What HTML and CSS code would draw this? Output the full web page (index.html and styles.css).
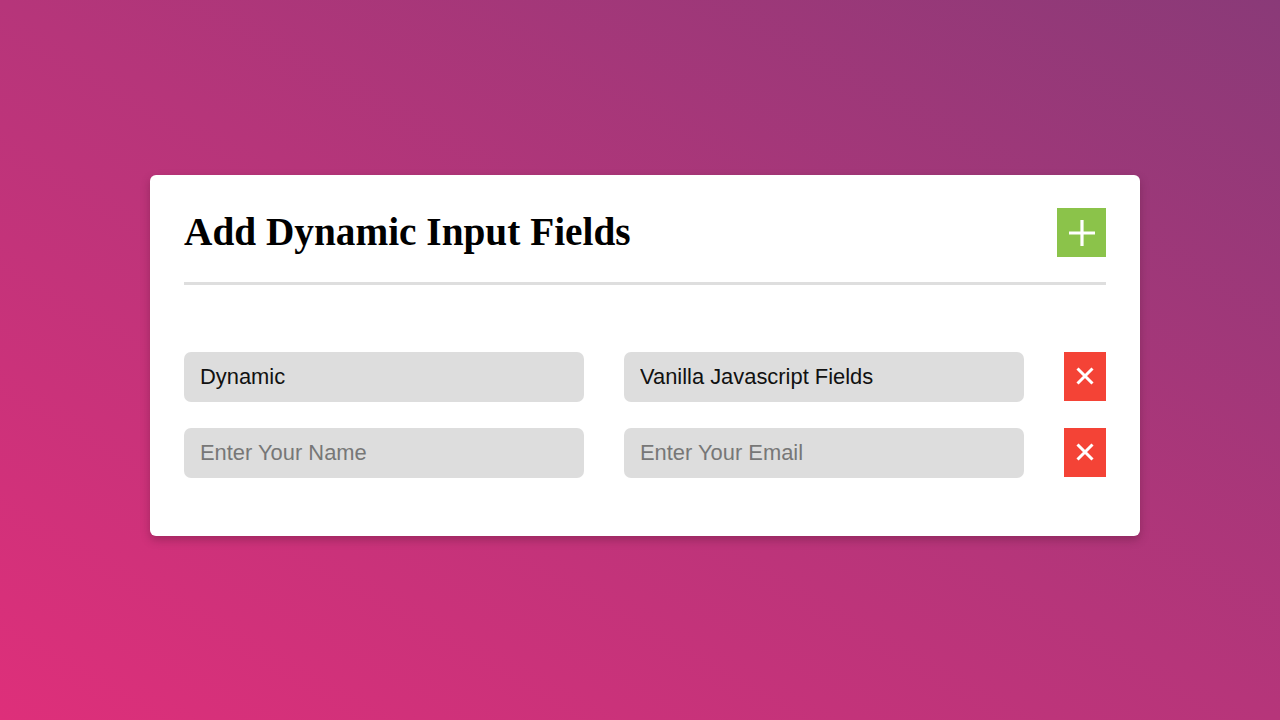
FILE: index.html
```html
<!DOCTYPE html>
<html>
<head>
<meta charset="utf-8">
<link rel="stylesheet" href="styles.css">
</head>
<body>
<div class="card">
  <div class="header">
    <h1 class="title">Add Dynamic Input Fields</h1>
    <button class="add-btn" aria-label="Add">
      <svg width="30" height="30" viewBox="0 0 30 30"><path d="M15 2V28M2 15H28" stroke="#fff" stroke-width="3.2" fill="none"/></svg>
    </button>
  </div>
  <div class="rows">
    <div class="row">
      <input class="field" type="text" value="Dynamic">
      <input class="field" type="text" value="Vanilla Javascript Fields">
      <button class="del-btn" aria-label="Remove">
        <svg width="18" height="18" viewBox="0 0 18 18"><path d="M1.5 1.5L16.5 16.5M16.5 1.5L1.5 16.5" stroke="#fff" stroke-width="3" fill="none"/></svg>
      </button>
    </div>
    <div class="row">
      <input class="field" type="text" placeholder="Enter Your Name">
      <input class="field" type="text" placeholder="Enter Your Email">
      <button class="del-btn" aria-label="Remove">
        <svg width="18" height="18" viewBox="0 0 18 18"><path d="M1.5 1.5L16.5 16.5M16.5 1.5L1.5 16.5" stroke="#fff" stroke-width="3" fill="none"/></svg>
      </button>
    </div>
  </div>
</div>
</body>
</html>
```
FILE: styles.css
```css
html, body {
  margin: 0;
  padding: 0;
}
body {
  width: 1280px;
  height: 720px;
  overflow: hidden;
  background: linear-gradient(to top right, #de2f7a 0%, #b6357a 50%, #8a3a78 100%);
  padding-top: 175px;
  padding-left: 150px;
  box-sizing: border-box;
}
.card {
  width: 990px;
  box-sizing: border-box;
  background: #fff;
  border-radius: 6px;
  padding: 33px 34px 58px 34px;
  box-shadow: 0 4px 8px rgba(80, 20, 50, 0.35);
}
.header {
  display: flex;
  align-items: center;
  justify-content: space-between;
  padding-bottom: 25px;
  border-bottom: 3px solid #dedede;
}
.title {
  margin: 0;
  font-family: "Liberation Serif", "Times New Roman", serif;
  font-weight: bold;
  font-size: 39.3px;
  color: #000;
  line-height: 49px;
}
.add-btn {
  width: 49px;
  height: 49px;
  border: none;
  padding: 0;
  margin: 0;
  background: #8bc34a;
  display: flex;
  align-items: center;
  justify-content: center;
}
.rows {
  display: flex;
  flex-direction: column;
  gap: 26px;
  padding-top: 67px;
}
.row {
  display: flex;
  align-items: flex-start;
  gap: 40px;
}
.field {
  width: 400px;
  height: 50px;
  box-sizing: border-box;
  border: none;
  outline: none;
  border-radius: 7px;
  background: #dddddd;
  padding: 0 16px;
  font-family: "Liberation Sans", Arial, sans-serif;
  font-size: 21.9px;
  color: #111;
}
.field::placeholder {
  color: #777;
}
.del-btn {
  width: 42px;
  height: 49px;
  border: none;
  padding: 0 0 2px 0;
  margin: 0;
  background: #f44336;
  display: flex;
  align-items: center;
  justify-content: center;
}
```
